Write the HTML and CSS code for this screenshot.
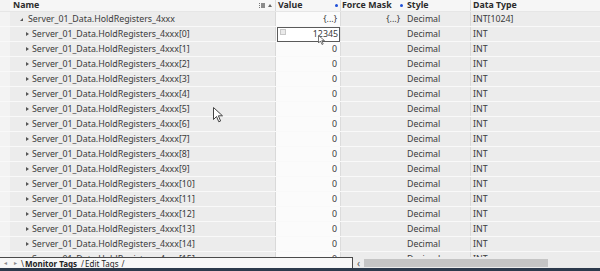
FILE: index.html
```html
<!DOCTYPE html>
<html lang="en">
<head>
    <meta charset="UTF-8">
    <title>Monitor Tags</title>
    <link rel="stylesheet" href="styles.css">
</head>
<body>
    <div class="window">
        <div class="grid">
            <div class="row head">
                <div class="gutter"></div>
                <div class="c name">Name
                    <span class="head-tools">
                        <svg width="13" height="7" viewBox="0 0 13 7"><rect x="0" y="1" width="1" height="1" fill="#777"/><rect x="0" y="3" width="1" height="1" fill="#777"/><rect x="0" y="5" width="1" height="1" fill="#777"/><rect x="2" y="1" width="4" height="5" fill="#8a8a8a"/><path d="M9 5 L11 2 L13 5 Z" fill="#666"/></svg>
                    </span>
                </div>
                <div class="c value">Value</div>
                <div class="c force"><span class="dot"></span>Force Mask</div>
                <div class="c style"><span class="dot"></span>Style</div>
                <div class="c type">Data Type</div>
            </div>

            <div class="row">
                <div class="gutter"></div>
                <div class="c name lvl0"><span class="tri open"></span>Server_01_Data.HoldRegisters_4xxx</div>
                <div class="c value num">{...}</div>
                <div class="c force num">{...}</div>
                <div class="c style">Decimal</div>
                <div class="c type">INT[1024]</div>
            </div>
            <div class="row">
                <div class="gutter"></div>
                <div class="c name lvl1"><span class="tri"></span>Server_01_Data.HoldRegisters_4xxx[0]</div>
                <div class="c value num editing">
                    <div class="editbox"><span class="chk"></span>12345</div>
                </div>
                <div class="c force"></div>
                <div class="c style">Decimal</div>
                <div class="c type">INT</div>
            </div>
            <div class="row">
                <div class="gutter"></div>
                <div class="c name lvl1"><span class="tri"></span>Server_01_Data.HoldRegisters_4xxx[1]</div>
                <div class="c value num">0</div>
                <div class="c force"></div>
                <div class="c style">Decimal</div>
                <div class="c type">INT</div>
            </div>
            <div class="row">
                <div class="gutter"></div>
                <div class="c name lvl1"><span class="tri"></span>Server_01_Data.HoldRegisters_4xxx[2]</div>
                <div class="c value num">0</div>
                <div class="c force"></div>
                <div class="c style">Decimal</div>
                <div class="c type">INT</div>
            </div>
            <div class="row">
                <div class="gutter"></div>
                <div class="c name lvl1"><span class="tri"></span>Server_01_Data.HoldRegisters_4xxx[3]</div>
                <div class="c value num">0</div>
                <div class="c force"></div>
                <div class="c style">Decimal</div>
                <div class="c type">INT</div>
            </div>
            <div class="row">
                <div class="gutter"></div>
                <div class="c name lvl1"><span class="tri"></span>Server_01_Data.HoldRegisters_4xxx[4]</div>
                <div class="c value num">0</div>
                <div class="c force"></div>
                <div class="c style">Decimal</div>
                <div class="c type">INT</div>
            </div>
            <div class="row">
                <div class="gutter"></div>
                <div class="c name lvl1"><span class="tri"></span>Server_01_Data.HoldRegisters_4xxx[5]</div>
                <div class="c value num">0</div>
                <div class="c force"></div>
                <div class="c style">Decimal</div>
                <div class="c type">INT</div>
            </div>
            <div class="row">
                <div class="gutter"></div>
                <div class="c name lvl1"><span class="tri"></span>Server_01_Data.HoldRegisters_4xxx[6]</div>
                <div class="c value num">0</div>
                <div class="c force"></div>
                <div class="c style">Decimal</div>
                <div class="c type">INT</div>
            </div>
            <div class="row">
                <div class="gutter"></div>
                <div class="c name lvl1"><span class="tri"></span>Server_01_Data.HoldRegisters_4xxx[7]</div>
                <div class="c value num">0</div>
                <div class="c force"></div>
                <div class="c style">Decimal</div>
                <div class="c type">INT</div>
            </div>
            <div class="row">
                <div class="gutter"></div>
                <div class="c name lvl1"><span class="tri"></span>Server_01_Data.HoldRegisters_4xxx[8]</div>
                <div class="c value num">0</div>
                <div class="c force"></div>
                <div class="c style">Decimal</div>
                <div class="c type">INT</div>
            </div>
            <div class="row">
                <div class="gutter"></div>
                <div class="c name lvl1"><span class="tri"></span>Server_01_Data.HoldRegisters_4xxx[9]</div>
                <div class="c value num">0</div>
                <div class="c force"></div>
                <div class="c style">Decimal</div>
                <div class="c type">INT</div>
            </div>
            <div class="row">
                <div class="gutter"></div>
                <div class="c name lvl1"><span class="tri"></span>Server_01_Data.HoldRegisters_4xxx[10]</div>
                <div class="c value num">0</div>
                <div class="c force"></div>
                <div class="c style">Decimal</div>
                <div class="c type">INT</div>
            </div>
            <div class="row">
                <div class="gutter"></div>
                <div class="c name lvl1"><span class="tri"></span>Server_01_Data.HoldRegisters_4xxx[11]</div>
                <div class="c value num">0</div>
                <div class="c force"></div>
                <div class="c style">Decimal</div>
                <div class="c type">INT</div>
            </div>
            <div class="row">
                <div class="gutter"></div>
                <div class="c name lvl1"><span class="tri"></span>Server_01_Data.HoldRegisters_4xxx[12]</div>
                <div class="c value num">0</div>
                <div class="c force"></div>
                <div class="c style">Decimal</div>
                <div class="c type">INT</div>
            </div>
            <div class="row">
                <div class="gutter"></div>
                <div class="c name lvl1"><span class="tri"></span>Server_01_Data.HoldRegisters_4xxx[13]</div>
                <div class="c value num">0</div>
                <div class="c force"></div>
                <div class="c style">Decimal</div>
                <div class="c type">INT</div>
            </div>
            <div class="row">
                <div class="gutter"></div>
                <div class="c name lvl1"><span class="tri"></span>Server_01_Data.HoldRegisters_4xxx[14]</div>
                <div class="c value num">0</div>
                <div class="c force"></div>
                <div class="c style">Decimal</div>
                <div class="c type">INT</div>
            </div>
            <div class="row">
                <div class="gutter"></div>
                <div class="c name lvl1"><span class="tri"></span>Server_01_Data.HoldRegisters_4xxx[15]</div>
                <div class="c value num">0</div>
                <div class="c force"></div>
                <div class="c style">Decimal</div>
                <div class="c type">INT</div>
            </div>
        </div>

        <div class="tabbar">
            <div class="tabs">
                <span class="nav">&#9666;</span>
                <span class="nav">&#9656;</span>
                <span class="tab active"><span class="edge">\</span>Monitor Tags</span>
                <span class="tab"><span class="edge">/</span>Edit Tags <span class="edge">/</span></span>
            </div>
            <div class="hscroll">
                <span class="arrow">&lsaquo;</span>
                <div class="track"></div>
            </div>
        </div>
        <div class="taskbar"></div>

        <!-- mouse pointers captured in the shot -->
        <svg class="pointer p1" width="11" height="16" viewBox="0 0 11 16"><path d="M0.5 0.5 L0.5 12.5 L3.5 9.5 L5.8 14.8 L7.6 14 L5.4 8.8 L9.5 8.8 Z" fill="#fff" stroke="#444" stroke-width="1"/></svg>
        <svg class="pointer p2" width="8" height="10" viewBox="0 0 8 10"><path d="M0.5 0.5 L0.5 8 L2.5 6 L4 9.5 L5.2 9 L3.8 5.6 L6.5 5.6 Z" fill="#fff" stroke="#555" stroke-width="0.8"/></svg>
    </div>
</body>
</html>
```

FILE: styles.css
```css
* {
    box-sizing: border-box;
}
body {
    margin: 0;
    font-family: "Noto Sans", "Open Sans", Arial, sans-serif;
    font-size: 8.8px;
    color: #3a3a3a;
    background: #efefef;
}
.window {
    position: relative;
    width: 600px;
    height: 271px;
    display: flex;
    flex-direction: column;
    overflow: hidden;
}
.grid {
    flex: 1;
    overflow: hidden;
}
.row {
    display: grid;
    grid-template-columns: 10px 266px 65px 61px 68px 130px;
    height: 15px;
    border-bottom: 1px solid #f9f9f9;
    background: #ececec;
}
.row.head {
    height: 12px;
    background: #f6f6f6;
    border-bottom: 1px solid #e6e6e6;
    font-weight: bold;
    color: #2c2c2c;
}
.c {
    display: flex;
    align-items: center;
    white-space: nowrap;
    overflow: visible;
    line-height: 1;
}
.gutter {
    background: #f3f3f3;
}
.name {
    padding-left: 3px;
    border-right: 1px solid #d9d9d9;
}
.head-tools {
    margin-left: auto;
    margin-right: 3px;
    display: flex;
}
.value {
    background: #fbfbfb;
    padding-left: 2px;
    border-right: 1px solid #dcdcdc;
}
.head .value {
    background: #f6f6f6;
}
.num {
    justify-content: flex-end;
    padding-right: 3px;
}
.force {
    padding-left: 1px;
}
.force.num {
    padding-right: 2px;
}
.style {
    padding-left: 5px;
}
.type {
    padding-left: 2px;
    border-left: 1px solid #d9d9d9;
}
.dot {
    width: 3px;
    height: 3px;
    border-radius: 50%;
    background: #1f4fd8;
    margin-left: -7px;
    margin-right: 4px;
}
.lvl0 {
    padding-left: 10px;
}
.lvl1 {
    padding-left: 16px;
}
.tri {
    width: 0;
    height: 0;
    border-top: 2.5px solid transparent;
    border-bottom: 2.5px solid transparent;
    border-left: 3px solid #555;
    margin-right: 3px;
}
.tri.open {
    border-top: none;
    border-left: 3px solid transparent;
    border-bottom: 3px solid #555;
    margin-right: 5px;
}
.editing {
    position: relative;
}
.editbox {
    position: absolute;
    top: 0;
    left: 1px;
    right: 0;
    bottom: -1px;
    border: 1px solid #5a5a5a;
    background: #fff;
    display: flex;
    align-items: center;
    justify-content: flex-end;
    padding-right: 1px;
}
.chk {
    position: absolute;
    left: 2px;
    top: 1px;
    width: 6px;
    height: 6px;
    border: 1px solid #c8c8c8;
    background: #eaeaea;
}
.tabbar {
    height: 11px;
    display: flex;
    background: #ececec;
}
.tabs {
    width: 353px;
    display: flex;
    align-items: center;
    background: #f7f7f7;
    border-top: 1px solid #4a4a4a;
    border-right: 1px solid #4a4a4a;
    font-size: 8px;
    color: #222;
}
.nav {
    font-size: 6px;
    color: #888;
    width: 10px;
    text-align: center;
}
.tab {
    padding-right: 3px;
}
.tab.active {
    font-weight: bold;
}
.edge {
    font-weight: normal;
    margin: 0 1px;
    color: #333;
}
.hscroll {
    flex: 1;
    display: flex;
    align-items: center;
}
.arrow {
    width: 11px;
    text-align: center;
    font-size: 10px;
    color: #555;
}
.track {
    width: 184px;
    height: 8px;
    background: #c5c5c5;
}
.taskbar {
    height: 3px;
    background: #2c3a4c;
}
.pointer {
    position: absolute;
}
.p1 {
    left: 213px;
    top: 107px;
}
.p2 {
    left: 318px;
    top: 35px;
}
```
